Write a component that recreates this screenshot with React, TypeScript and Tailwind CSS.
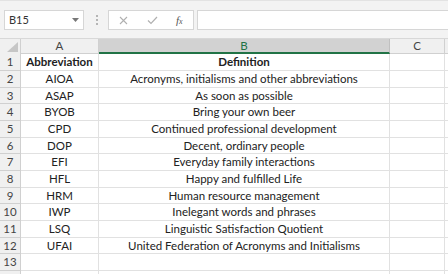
import React from "react";

const rows: [string, string][] = [
  ["Abbreviation", "Definition"],
  ["AIOA", "Acronyms, initialisms and other abbreviations"],
  ["ASAP", "As soon as possible"],
  ["BYOB", "Bring your own beer"],
  ["CPD", "Continued professional development"],
  ["DOP", "Decent, ordinary people"],
  ["EFI", "Everyday family interactions"],
  ["HFL", "Happy and fulfilled Life"],
  ["HRM", "Human resource management"],
  ["IWP", "Inelegant words and phrases"],
  ["LSQ", "Linguistic Satisfaction Quotient"],
  ["UFAI", "United Federation of Acronyms and Initialisms"],
  ["", ""],
  ["", ""],
];

export default function App() {
  return (
    <div
      className="w-[448px] h-[274px] overflow-hidden bg-white text-[#222]"
      style={{ fontFamily: "Lato, 'Open Sans', sans-serif" }}
    >
      {/* toolbar */}
      <div className="h-[38px] bg-[#f3f3f3] border-t border-[#e3e3e3] flex items-start pt-[9px]">
        <div className="ml-[4px] w-[80px] h-[20px] bg-white border border-[#d6d6d6] flex items-center justify-between pl-[4px] pr-[4px]">
          <span className="text-[11px] text-[#333]">B15</span>
          <svg width="7" height="4" viewBox="0 0 7 4">
            <path d="M0 0 L7 0 L3.5 4 Z" fill="#777" />
          </svg>
        </div>
        <div className="ml-[12px] h-[20px] flex flex-col justify-center gap-[2px]">
          <div className="w-[2px] h-[2px] bg-[#b5b5b5]" />
          <div className="w-[2px] h-[2px] bg-[#b5b5b5]" />
          <div className="w-[2px] h-[2px] bg-[#b5b5b5]" />
        </div>
        <div className="ml-[10px] w-[86px] h-[20px] bg-white border border-[#d6d6d6] flex items-center">
          <svg className="ml-[10px]" width="9" height="9" viewBox="0 0 9 9">
            <path d="M1 1 L8 8 M8 1 L1 8" stroke="#b0b0b0" strokeWidth="1.1" />
          </svg>
          <svg className="ml-[19px]" width="11" height="9" viewBox="0 0 11 9">
            <path d="M1 4.5 L4 7.5 L10 1" stroke="#b0b0b0" strokeWidth="1.2" fill="none" />
          </svg>
          <span
            className="ml-[18px] text-[11px] italic text-[#555] leading-none"
            style={{ fontFamily: "'Liberation Serif', serif" }}
          >
            f<span className="text-[8px]">x</span>
          </span>
        </div>
        <div className="ml-[3px] flex-1 h-[20px] bg-white border border-[#d6d6d6] border-r-0" />
      </div>

      {/* column headers */}
      <div className="flex h-[16px] bg-[#f0f0f0] border-t border-[#d8d8d8] text-[11.5px]">
        <div className="w-[21px] border-r border-[#d0d0d0] relative">
          <svg className="absolute right-[2px] bottom-[2px]" width="11" height="10" viewBox="0 0 11 10">
            <path d="M11 0 L11 10 L0 10 Z" fill="#c6c6c6" />
          </svg>
        </div>
        <div className="w-[78px] border-r border-[#d0d0d0] border-b border-b-[#d0d0d0] flex items-center justify-center text-[#444]">
          A
        </div>
        <div className="w-[291px] bg-[#d2d2d2] border-r border-[#c0c0c0] border-b-2 border-b-[#217346] flex items-center justify-center text-[#217346]">
          B
        </div>
        <div className="w-[55px] border-r border-[#d0d0d0] border-b border-b-[#d0d0d0] flex items-center justify-center text-[#444]">
          C
        </div>
        <div className="flex-1 border-b border-b-[#d0d0d0]" />
      </div>

      {/* rows */}
      {rows.map((r, i) => (
        <div
          key={i}
          className={
            "flex text-[11.5px] " + (i % 3 === 2 ? "h-[16px]" : "h-[17px]")
          }
        >
          <div className="w-[21px] bg-[#f0f0f0] border-r border-b border-[#d0d0d0] flex items-center justify-center text-[#444]">
            {i < 13 ? i + 1 : ""}
          </div>
          <div
            className={
              "w-[78px] border-r border-b border-[#e1e1e1] flex items-center justify-center whitespace-nowrap " +
              (i === 0 ? "font-bold" : "")
            }
          >
            {r[0]}
          </div>
          <div
            className={
              "w-[291px] border-r border-b border-[#e1e1e1] flex items-center justify-center whitespace-nowrap " +
              (i === 0 ? "font-bold" : "")
            }
          >
            {r[1]}
          </div>
          <div className="w-[55px] border-r border-b border-[#e1e1e1]" />
          <div className="flex-1 border-b border-[#e1e1e1]" />
        </div>
      ))}
    </div>
  );
}
